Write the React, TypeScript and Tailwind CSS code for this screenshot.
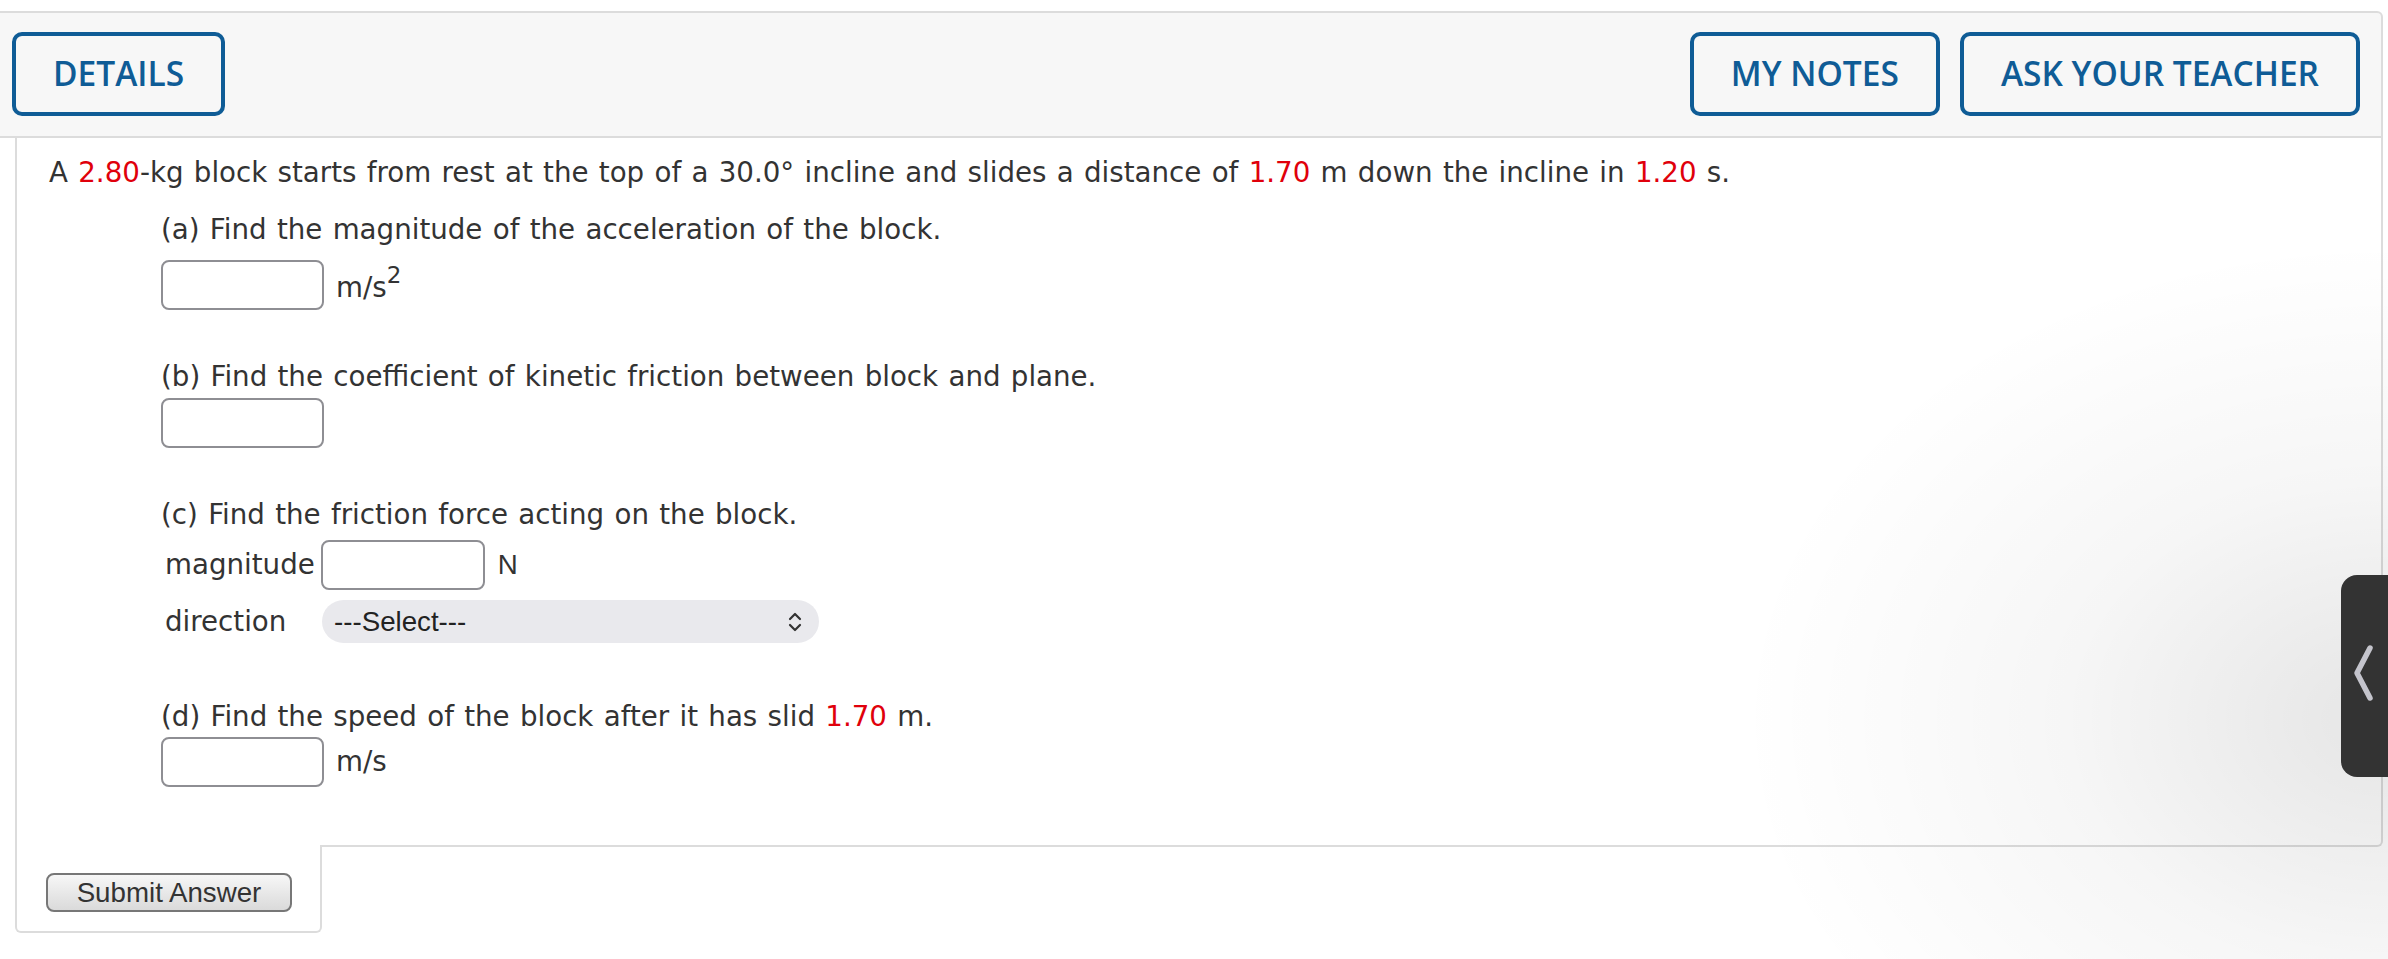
import React from "react";

const red = "text-[#e0000b]";

function HeaderButton({ label }: { label: string }) {
  return (
    <button className="flex h-[84px] items-center rounded-[10px] border-[4px] border-[#0f5c96] px-[37px] font-['Open_Sans',sans-serif] text-[33.5px] font-semibold leading-none text-[#0f5c96]">
      {label}
    </button>
  );
}

function AnswerBox({ className = "" }: { className?: string }) {
  return (
    <div
      className={
        "h-[50px] rounded-[8px] border-2 border-[#8e8e93] bg-white " + className
      }
    />
  );
}

export default function App() {
  return (
    <div className="relative h-[959px] w-full overflow-hidden bg-white font-['DejaVu_Sans',Verdana,sans-serif] text-[27.7px] text-[#333] [word-spacing:1.5px]">
      <div className="pt-[11px]">
        {/* header bar */}
        <header className="flex h-[127px] w-[2383px] items-start rounded-tr-[6px] border-y-2 border-r-2 border-[#dcdcdc] bg-[#f7f7f7] pl-[12px] pr-[21px] pt-[19px] [word-spacing:0px]">
          <HeaderButton label="DETAILS" />
          <div className="ml-auto flex gap-[20px]">
            <HeaderButton label="MY NOTES" />
            <HeaderButton label="ASK YOUR TEACHER" />
          </div>
        </header>

        {/* question body */}
        <div className="ml-[15px] w-[2368px] rounded-br-[6px] border-x-2 border-b-2 border-[#dcdcdc] pb-[58px] pl-[32px] leading-[34px]">
          <p className="pt-[18px]">
            A <span className={red}>2.80</span>-kg block starts from rest at the top of a 30.0° incline and slides a
            distance of <span className={red}>1.70</span> m down the incline in <span className={red}>1.20</span> s.
          </p>

          <div className="ml-[112px]">
            <p className="mt-[23px]">(a) Find the magnitude of the acceleration of the block.</p>
            <div className="mt-[13px] flex items-center">
              <AnswerBox className="w-[163px]" />
              <span className="ml-[12px] mt-[6px]">
                m/s<sup className="relative -top-[14px] text-[23px]">2</sup>
              </span>
            </div>

            <p className="mt-[50px]">(b) Find the coefficient of kinetic friction between block and plane.</p>
            <AnswerBox className="mt-[4px] w-[163px]" />

            <p className="mt-[50px]">(c) Find the friction force acting on the block.</p>
            <div className="mt-[8px] flex items-center">
              <span className="ml-[4px]">magnitude</span>
              <AnswerBox className="ml-[6px] w-[164px]" />
              <span className="ml-[13px] font-['Liberation_Sans',Arial,sans-serif]">N</span>
            </div>
            <div className="mt-[10px] flex items-center">
              <span className="ml-[4px] w-[157px]">direction</span>
              <div className="flex h-[43px] w-[497px] items-center justify-between rounded-full bg-[#e9e9ed] pl-[12px] pr-[16px] font-['Liberation_Sans',Arial,sans-serif] text-[#222] [word-spacing:0px]">
                <span>---Select---</span>
                <svg width="16" height="24" viewBox="0 0 16 24" fill="none">
                  <path d="M3 9 L8 4 L13 9" stroke="#333" strokeWidth="2.2" strokeLinecap="round" strokeLinejoin="round" />
                  <path d="M3 15 L8 20 L13 15" stroke="#333" strokeWidth="2.2" strokeLinecap="round" strokeLinejoin="round" />
                </svg>
              </div>
            </div>

            <p className="mt-[57px]">
              (d) Find the speed of the block after it has slid <span className={red}>1.70</span> m.
            </p>
            <div className="mt-[3px] flex items-center">
              <AnswerBox className="w-[163px]" />
              <span className="ml-[12px]">m/s</span>
            </div>
          </div>
        </div>

        {/* submit tab */}
        <div className="relative -mt-[2px] ml-[15px] h-[88px] w-[307px] rounded-b-[6px] border-x-2 border-b-2 border-[#dcdcdc] bg-white pl-[29px] pt-[27px]">
          <button className="h-[39px] w-[246px] rounded-[8px] border-2 border-[#777] bg-gradient-to-b from-[#f7f7f7] to-[#dadada] font-['Liberation_Sans',Arial,sans-serif] text-[27.7px] leading-none text-[#333] [word-spacing:0px]">
            Submit Answer
          </button>
        </div>
      </div>

      {/* shadow around the side tab */}
      <div className="pointer-events-none absolute inset-y-0 right-0 w-[1000px] bg-[radial-gradient(ellipse_650px_480px_at_100%_75%,rgba(0,0,0,0.10),rgba(0,0,0,0.035)_50%,transparent_100%)]" />

      {/* side drawer tab */}
      <div className="absolute right-0 top-[575px] h-[202px] w-[47px] rounded-l-[16px] bg-[#333]">
        <svg width="47" height="202" viewBox="0 0 47 202" fill="none">
          <path d="M29 73 L16 98 L29 123" stroke="#c4c4cc" strokeWidth="5.5" strokeLinecap="round" strokeLinejoin="round" />
        </svg>
      </div>
    </div>
  );
}
